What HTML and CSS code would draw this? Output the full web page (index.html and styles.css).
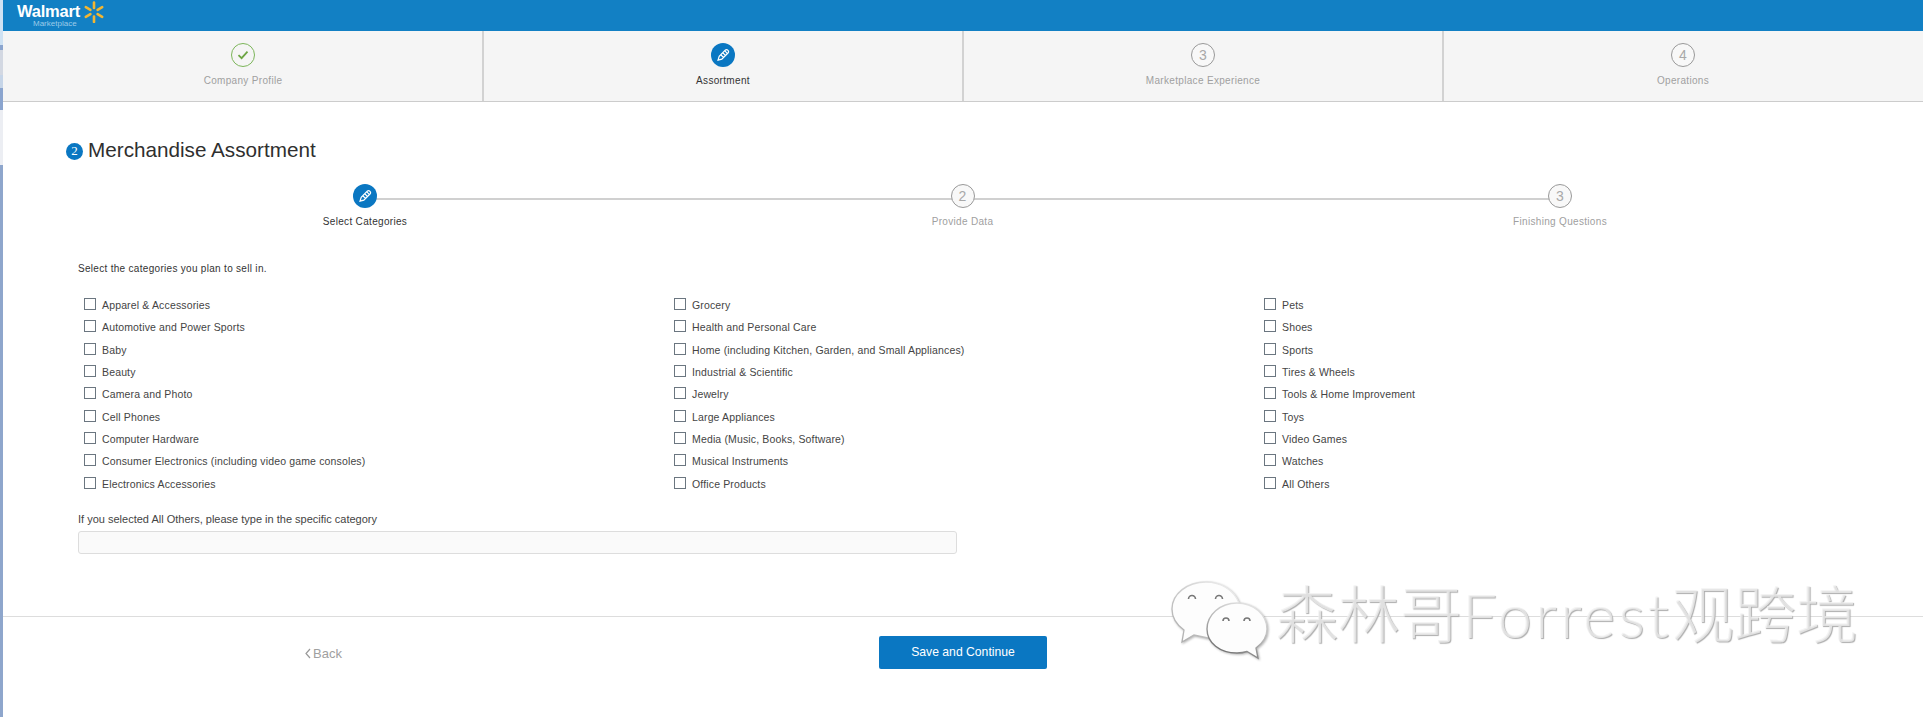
FILE: index.html
```html
<!DOCTYPE html>
<html lang="en">
<head>
<meta charset="utf-8">
<title>Merchandise Assortment</title>
<link rel="stylesheet" href="styles.css">
</head>
<body>
<div class="sidebar-edge"></div>
<div class="page">
  <header class="topbar">
    <div class="logo">
      <div class="logo-text">
        <span class="logo-name">Walmart</span>
        <span class="logo-sub">Marketplace</span>
      </div>
      <svg class="spark" width="22" height="22" viewBox="0 0 22 22" aria-hidden="true">
        <g stroke="#f2b632" stroke-width="2.6" stroke-linecap="round">
          <path d="M11 1.5V7"/><path d="M11 15.5V21"/>
          <path d="M2.8 6.2L7.4 8.8"/><path d="M14.6 13.2L19.2 15.8"/>
          <path d="M2.8 15.8L7.4 13.2"/><path d="M14.6 8.8L19.2 6.2"/>
        </g>
      </svg>
    </div>
  </header>

  <nav class="tabs">
    <div class="tab">
      <span class="circle circle-done">
        <svg width="12" height="10" viewBox="0 0 12 10"><path d="M1.5 5.2L4.6 8.2L10.5 1.6" fill="none" stroke="#6da544" stroke-width="1.8"/></svg>
      </span>
      <span class="tab-label">Company Profile</span>
    </div>
    <div class="tab tab-current">
      <span class="circle circle-active">
        <svg width="14" height="14" viewBox="0 0 14 14"><path d="M2 12.2L3.2 8.4L9.2 2.2C10 1.5 11.2 1.6 12 2.4C12.7 3.2 12.7 4.3 12 5L5.8 11.1ZM5 7L7.4 9.2M7 5L9.2 7.2M9 3.2L11 5.2" fill="none" stroke="#fff" stroke-width="1.2"/></svg>
      </span>
      <span class="tab-label">Assortment</span>
    </div>
    <div class="tab">
      <span class="circle circle-todo">3</span>
      <span class="tab-label">Marketplace Experience</span>
    </div>
    <div class="tab">
      <span class="circle circle-todo">4</span>
      <span class="tab-label">Operations</span>
    </div>
  </nav>

  <main class="content">
    <h1 class="title"><span class="title-badge">2</span>Merchandise Assortment</h1>

    <div class="stepper">
      <div class="step">
        <span class="circle circle-active">
          <svg width="14" height="14" viewBox="0 0 14 14"><path d="M2 12.2L3.2 8.4L9.2 2.2C10 1.5 11.2 1.6 12 2.4C12.7 3.2 12.7 4.3 12 5L5.8 11.1ZM5 7L7.4 9.2M7 5L9.2 7.2M9 3.2L11 5.2" fill="none" stroke="#fff" stroke-width="1.2"/></svg>
        </span>
        <span class="step-label step-label-current">Select Categories</span>
      </div>
      <div class="step">
        <span class="circle circle-todo">2</span>
        <span class="step-label">Provide Data</span>
      </div>
      <div class="step">
        <span class="circle circle-todo">3</span>
        <span class="step-label">Finishing Questions</span>
      </div>
    </div>

    <p class="intro">Select the categories you plan to sell in.</p>

    <div class="categories">
      <label class="cat"><span class="box"></span>Apparel &amp; Accessories</label>
      <label class="cat"><span class="box"></span>Grocery</label>
      <label class="cat"><span class="box"></span>Pets</label>
      <label class="cat"><span class="box"></span>Automotive and Power Sports</label>
      <label class="cat"><span class="box"></span>Health and Personal Care</label>
      <label class="cat"><span class="box"></span>Shoes</label>
      <label class="cat"><span class="box"></span>Baby</label>
      <label class="cat"><span class="box"></span>Home (including Kitchen, Garden, and Small Appliances)</label>
      <label class="cat"><span class="box"></span>Sports</label>
      <label class="cat"><span class="box"></span>Beauty</label>
      <label class="cat"><span class="box"></span>Industrial &amp; Scientific</label>
      <label class="cat"><span class="box"></span>Tires &amp; Wheels</label>
      <label class="cat"><span class="box"></span>Camera and Photo</label>
      <label class="cat"><span class="box"></span>Jewelry</label>
      <label class="cat"><span class="box"></span>Tools &amp; Home Improvement</label>
      <label class="cat"><span class="box"></span>Cell Phones</label>
      <label class="cat"><span class="box"></span>Large Appliances</label>
      <label class="cat"><span class="box"></span>Toys</label>
      <label class="cat"><span class="box"></span>Computer Hardware</label>
      <label class="cat"><span class="box"></span>Media (Music, Books, Software)</label>
      <label class="cat"><span class="box"></span>Video Games</label>
      <label class="cat"><span class="box"></span>Consumer Electronics (including video game consoles)</label>
      <label class="cat"><span class="box"></span>Musical Instruments</label>
      <label class="cat"><span class="box"></span>Watches</label>
      <label class="cat"><span class="box"></span>Electronics Accessories</label>
      <label class="cat"><span class="box"></span>Office Products</label>
      <label class="cat"><span class="box"></span>All Others</label>
    </div>

    <p class="other-label">If you selected All Others, please type in the specific category</p>
    <div class="other-input"></div>
  </main>

  <footer class="footer">
    <div class="footer-col">
      <a class="back"><svg width="6" height="11" viewBox="0 0 6 11"><path d="M5 1L1 5.5L5 10" fill="none" stroke="#999" stroke-width="1.2"/></svg>Back</a>
    </div>
    <button class="save" type="button">Save and Continue</button>
  </footer>
</div>

<div class="watermark">
  <svg class="wechat" width="100" height="82" viewBox="0 0 100 82" aria-hidden="true">
    <defs>
      <linearGradient id="edgeBack" x1="1" y1="0" x2="0" y2="1">
        <stop offset="0" stop-color="#f4f4f4"/>
        <stop offset="1" stop-color="#a8a8a8"/>
      </linearGradient>
      <linearGradient id="edgeFront" x1="0.8" y1="0" x2="0.3" y2="1">
        <stop offset="0" stop-color="#e8e8e8"/>
        <stop offset="0.55" stop-color="#b0b0b0"/>
        <stop offset="1" stop-color="#666"/>
      </linearGradient>
    </defs>
    <path d="M69 25C64 12 51 4 36 4C17 4 2 16 2 31C2 40 7 47 14 52L12 64L24 57L38 60Z" fill="#fdfdfd" stroke="url(#edgeBack)" stroke-width="1.3"/>
    <path d="M18.5 21a3.5 3.5 0 0 1 7 0M45.5 21a3.5 3.5 0 0 1 7 0" fill="none" stroke="#777" stroke-width="1.6"/>
    <path d="M67 25C50 25 37 37 37 51C37 65 50 75 67 75C71 75 74 74.5 77 73.5L88 80L86 70C93 65 97 58 97 51C97 37 84 25 67 25Z" fill="#fdfdfd" stroke="url(#edgeFront)" stroke-width="1.4"/>
    <path d="M53 43a3 3 0 0 1 6 0M74 43a3 3 0 0 1 6 0" fill="none" stroke="#777" stroke-width="1.6"/>
  </svg>
  <span class="wm-text"><span class="wm-cjk">森林哥</span><span class="wm-latin">Forrest</span><span class="wm-cjk">观跨境</span></span>
</div>
</body>
</html>
```
FILE: styles.css
```css
* { box-sizing: border-box; }
html, body { margin: 0; padding: 0; background: #fff; }
body {
  width: 1923px;
  height: 717px;
  overflow: hidden;
  position: relative;
  font-family: "Liberation Sans", Arial, sans-serif;
  color: #333;
}
.sidebar-edge {
  position: absolute;
  left: 0; top: 0;
  width: 3px; height: 100%;
  background: linear-gradient(
    #cfe2f3 0, #cfe2f3 45px,
    #8ba5cf 45px, #8ba5cf 50px,
    #d3d8e2 50px, #d3d8e2 75px,
    #c6d5e8 75px, #c6d5e8 88px,
    #8ba5cf 88px, #8ba5cf 110px,
    #eceef3 110px, #eceef3 165px,
    #8ea6cc 165px);
}
.page { margin-left: 3px; }
.topbar {
  height: 31px;
  background: #1280c4;
  padding-left: 14px;
}
.logo { display: flex; align-items: flex-start; gap: 2px; }
.logo-text { display: flex; flex-direction: column; width: 64px; }
.logo-name { font-size: 16.5px; font-weight: 700; color: #fff; line-height: 18px; margin-top: 2px; letter-spacing: -0.2px; white-space: nowrap; }
.logo-sub { font-size: 8px; color: #9ccbe9; line-height: 8px; padding-left: 16px; white-space: nowrap; }
.spark { margin-top: 1px; }

.tabs {
  display: grid;
  grid-template-columns: repeat(4, 480px);
  height: 71px;
  background: #f5f5f5;
  border-bottom: 1px solid #ccc;
}
.tab {
  display: flex;
  flex-direction: column;
  align-items: center;
  padding-top: 12px;
  box-shadow: 1px 0 #d2d2d2, inset -1px 0 #d2d2d2;
}
.tab:last-child { box-shadow: none; }
.tab-label { font-size: 10px; line-height: 12px; margin-top: 8px; color: #a0a0a0; letter-spacing: 0.32px; }
.tab-current .tab-label { color: #333; }

.circle {
  width: 24px; height: 24px;
  border-radius: 50%;
  display: flex;
  align-items: center;
  justify-content: center;
  flex: none;
  font-size: 14px;
  font-weight: 300;
  background: #fff;
}
.circle-done { border: 1px solid #7cb55a; background: transparent; }
.circle-active { background: #0a77c2; }
.circle-todo { border: 1px solid #999; color: #a8a8a8; background: #f8f8f8; }

.content { padding: 0 75px; }
.title {
  margin: 0;
  padding-top: 35px;
  margin-left: -12px;
  font-size: 20.7px;
  line-height: 26px;
  font-weight: 400;
  color: #2f2f2f;
  display: flex;
  align-items: center;
}
.title-badge {
  width: 17px; height: 17px;
  border-radius: 50%;
  background: #0a77c2;
  color: #fff;
  font-family: "Liberation Serif", serif;
  font-size: 13px;
  display: flex;
  align-items: center;
  justify-content: center;
  margin-right: 5px;
  margin-top: 2px;
}

.stepper {
  margin-top: 21px;
  margin-left: 227px;
  width: 1315px;
  display: flex;
  justify-content: space-between;
  background: linear-gradient(#d0d0d0, #d0d0d0) no-repeat 60px 14px / 1195px 2px;
}
.step {
  width: 120px;
  display: flex;
  flex-direction: column;
  align-items: center;
}
.step-label { font-size: 10px; line-height: 12px; margin-top: 8px; color: #a0a0a0; letter-spacing: 0.32px; }
.step-label-current { color: #333; }

.intro { margin: 0; padding-top: 35px; font-size: 10px; line-height: 12px; letter-spacing: 0.3px; color: #333; }

.categories {
  margin-top: 19px;
  display: grid;
  grid-template-columns: repeat(3, 590px);
  grid-auto-rows: 22.3px;
  padding-left: 6px;
}
.cat {
  display: flex;
  align-items: center;
  font-size: 10.5px;
  letter-spacing: 0.15px;
  color: #444;
  white-space: nowrap;
}
.box {
  width: 12px; height: 12px;
  border: 1px solid #6b7680;
  background: #fff;
  margin-right: 6px;
  flex: none;
  position: relative;
  top: -1px;
}
.other-label { margin: 0; padding-top: 18px; font-size: 11px; line-height: 13px; color: #444; }
.other-input {
  margin-top: 5px;
  width: 879px;
  height: 23px;
  background: #fafafa;
  border: 1px solid #ddd;
  border-radius: 3px;
}

.footer {
  position: absolute;
  left: 3px; right: 0; top: 616px;
  height: 101px;
  border-top: 1px solid #ddd;
  padding-top: 19px;
  display: flex;
  align-items: flex-start;
}
.footer-col { width: 876px; padding-left: 302px; padding-top: 9px; }
.back {
  display: inline-flex;
  align-items: center;
  gap: 2px;
  font-size: 13px;
  color: #a0a0a0;
}
.save {
  width: 168px; height: 33px;
  border: 0;
  border-radius: 2px;
  background: #0a77c2;
  color: #fff;
  font-family: "Liberation Sans", Arial, sans-serif;
  font-size: 12.2px;
  padding: 0 0 2px;
}

.watermark {
  position: absolute;
  left: 1170px; top: 578px;
  display: flex;
  align-items: flex-start;
  gap: 6px;
  pointer-events: none;
}
.wechat { filter: drop-shadow(1px 1px 1px rgba(90, 90, 90, 0.45)); }
.wm-text {
  font-size: 62px;
  line-height: 72px;
  color: rgba(242, 242, 242, 0.75);
  text-shadow: 1px 1px 1px #adadad;
  white-space: nowrap;
  margin-top: -3px;
}
.wm-cjk { font-family: "Noto Sans CJK SC", sans-serif; font-weight: 300; }
.wm-latin { font-family: Lato, "Liberation Sans", sans-serif; font-weight: 300; letter-spacing: 3px; }
```
